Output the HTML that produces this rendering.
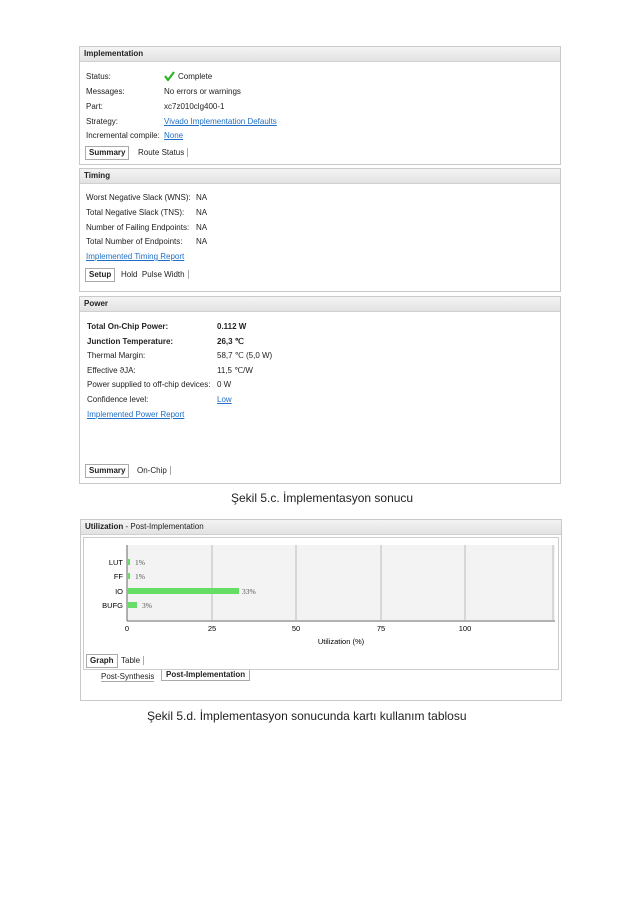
<!DOCTYPE html><html><head><meta charset="utf-8"><style>
body{margin:0;width:638px;height:902px;background:#fff;position:relative;font-family:"Liberation Sans",sans-serif;font-size:8px;color:#222;overflow:hidden}
.a{position:absolute;white-space:nowrap}
.p{position:absolute;border:1px solid #c9c9c9;background:#fff}
.h{position:absolute;left:0;right:0;top:0;height:14px;background:linear-gradient(#f4f4f4,#e2e2e2);border-bottom:1px solid #d0d0d0;font-weight:bold;padding-left:4px;line-height:14px}
.l{color:#1f6fc6;text-decoration:underline}
.b{font-weight:bold}
.tab{position:absolute;height:12px;line-height:12px;border:1px solid #aaa;padding:0 3px;background:#fff}
.cap{position:absolute;font-size:12px;color:#222;white-space:nowrap}
</style></head><body>
<div class="p" style="left:79px;top:46px;width:480px;height:117px">
<div class="h">Implementation</div>
<div class="a" style="left:6px;top:25px">Status:</div>
<svg class="a" style="left:84px;top:24px" width="11" height="10"><path d="M1 5 L4 9 L10 1" stroke="#2bb52b" stroke-width="2.2" fill="none"/></svg>
<div class="a" style="left:98px;top:25px">Complete</div>
<div class="a" style="left:6px;top:40px">Messages:</div><div class="a" style="left:84px;top:40px">No errors or warnings</div>
<div class="a" style="left:6px;top:55px">Part:</div><div class="a" style="left:84px;top:55px">xc7z010clg400-1</div>
<div class="a" style="left:6px;top:70px">Strategy:</div><div class="a l" style="left:84px;top:70px">Vivado Implementation Defaults</div>
<div class="a" style="left:6px;top:84px">Incremental compile:</div><div class="a l" style="left:84px;top:84px">None</div>
<div class="tab b" style="left:5px;top:99px">Summary</div>
<div class="a" style="left:58px;top:101px;border-right:1px solid #aaa;padding-right:3px">Route Status</div>
</div>
<div class="p" style="left:79px;top:168px;width:480px;height:122px">
<div class="h">Timing</div>
<div class="a" style="left:6px;top:24px">Worst Negative Slack (WNS):</div><div class="a" style="left:116px;top:24px">NA</div>
<div class="a" style="left:6px;top:39px">Total Negative Slack (TNS):</div><div class="a" style="left:116px;top:39px">NA</div>
<div class="a" style="left:6px;top:54px">Number of Failing Endpoints:</div><div class="a" style="left:116px;top:54px">NA</div>
<div class="a" style="left:6px;top:68px">Total Number of Endpoints:</div><div class="a" style="left:116px;top:68px">NA</div>
<div class="a l" style="left:6px;top:83px">Implemented Timing Report</div>
<div class="tab b" style="left:5px;top:99px">Setup</div>
<div class="a" style="left:41px;top:101px;border-right:1px solid #aaa;padding-right:3px">Hold&nbsp; Pulse Width</div>
</div>
<div class="p" style="left:79px;top:296px;width:480px;height:186px">
<div class="h">Power</div>
<div class="a b" style="left:7px;top:25px">Total On-Chip Power:</div><div class="a b" style="left:137px;top:25px">0.112 W</div>
<div class="a b" style="left:7px;top:40px">Junction Temperature:</div><div class="a b" style="left:137px;top:40px">26,3 ℃</div>
<div class="a" style="left:7px;top:54px">Thermal Margin:</div><div class="a" style="left:137px;top:54px">58,7 ℃ (5,0 W)</div>
<div class="a" style="left:7px;top:69px">Effective ϑJA:</div><div class="a" style="left:137px;top:69px">11,5 ℃/W</div>
<div class="a" style="left:7px;top:83px">Power supplied to off-chip devices:</div><div class="a" style="left:137px;top:83px">0 W</div>
<div class="a" style="left:7px;top:98px">Confidence level:</div><div class="a l" style="left:137px;top:98px">Low</div>
<div class="a l" style="left:7px;top:113px">Implemented Power Report</div>
<div class="tab b" style="left:5px;top:167px">Summary</div>
<div class="a" style="left:57px;top:169px;border-right:1px solid #aaa;padding-right:3px">On-Chip</div>
</div>
<div class="cap" style="left:231px;top:491px">Şekil 5.c. İmplementasyon sonucu</div>
<div class="p" style="left:80px;top:519px;width:480px;height:180px">
<div class="h" style="font-weight:normal"><b>Utilization</b> - Post-Implementation</div>
<div class="p" style="left:2px;top:17px;width:474px;height:131px;border-color:#ccc"></div>
<svg class="a" style="left:0;top:0" width="480" height="160" font-family="Liberation Sans" font-size="7.5">
<rect x="46" y="25" width="428" height="75" fill="#f3f3f3"/>
<g stroke="#bbb"><line x1="131" y1="25" x2="131" y2="100"/><line x1="215" y1="25" x2="215" y2="100"/><line x1="300" y1="25" x2="300" y2="100"/><line x1="384" y1="25" x2="384" y2="100"/><line x1="472" y1="25" x2="472" y2="100"/></g>
<line x1="46" y1="25" x2="46" y2="101" stroke="#666"/><line x1="46" y1="101" x2="474" y2="101" stroke="#666"/>
<rect x="46" y="39" width="3" height="6" fill="#66dd66"/><rect x="46" y="53" width="3" height="6" fill="#66dd66"/><rect x="46" y="68" width="112" height="6" fill="#66dd66"/><rect x="46" y="82" width="10" height="6" fill="#66dd66"/>
<g text-anchor="end"><text x="42" y="45">LUT</text><text x="42" y="59">FF</text><text x="42" y="74">IO</text><text x="42" y="88">BUFG</text></g>
<g fill="#555" font-family="Liberation Serif"><text x="54" y="45">1%</text><text x="54" y="59">1%</text><text x="161" y="74">33%</text><text x="61" y="88">3%</text></g>
<g text-anchor="middle"><text x="46" y="111">0</text><text x="131" y="111">25</text><text x="215" y="111">50</text><text x="300" y="111">75</text><text x="384" y="111">100</text><text x="260" y="124">Utilization (%)</text></g>
</svg>
<div class="tab b" style="left:5px;top:134px">Graph</div>
<div class="a" style="left:40px;top:136px;border-right:1px solid #aaa;padding-right:3px">Table</div>
<div class="a" style="left:20px;top:152px;border-bottom:1px solid #aaa">Post-Synthesis</div>
<div class="a b" style="left:80px;top:150px;border:1px solid #aaa;border-top:none;padding:0 4px 1px">Post-Implementation</div>
</div>
<div class="cap" style="left:147px;top:709px">Şekil 5.d. İmplementasyon sonucunda kartı kullanım tablosu</div>
</body></html>
